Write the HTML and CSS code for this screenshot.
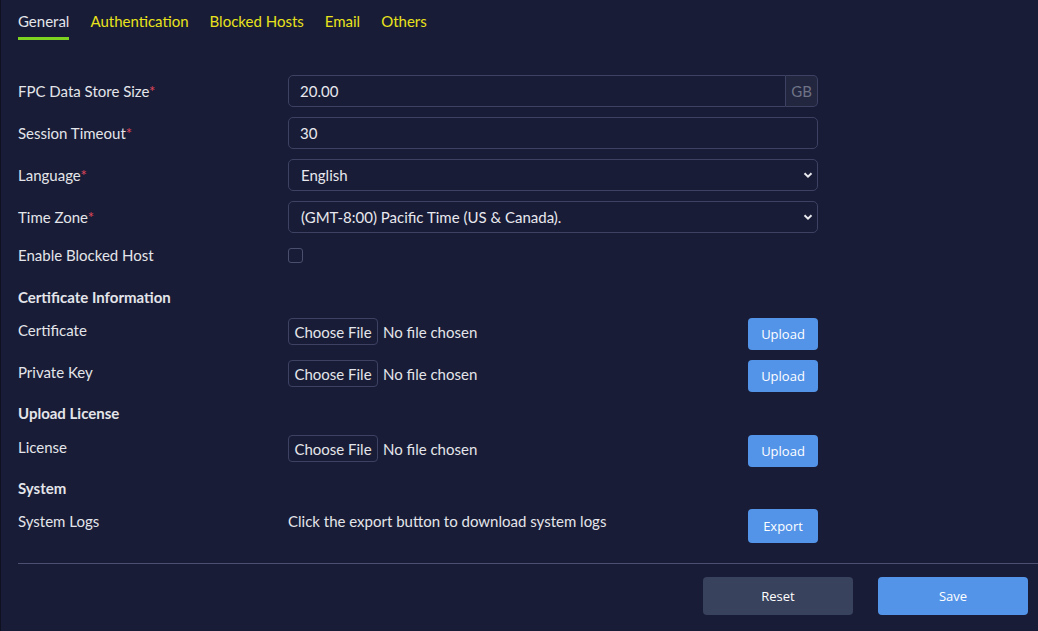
FILE: index.html
```html
<!DOCTYPE html>
<html>
<head>
    <title>Settings</title>
    <meta name="viewport" content="width=device-width, initial-scale=1.0">
    <link rel="stylesheet" href="styles.css">
</head>
<body>
    <div class="page">
        <!-- Tabs -->
        <nav class="tabs">
            <a class="tab active">General</a>
            <a class="tab">Authentication</a>
            <a class="tab">Blocked Hosts</a>
            <a class="tab">Email</a>
            <a class="tab">Others</a>
        </nav>

        <form class="settings">
            <div class="row">
                <label for="store-size">FPC Data Store Size<span class="req">*</span></label>
                <div class="input-group">
                    <input type="text" id="store-size" class="field" value="20.00">
                    <span class="addon">GB</span>
                </div>
            </div>

            <div class="row">
                <label for="session-timeout">Session Timeout<span class="req">*</span></label>
                <input type="text" id="session-timeout" class="field" value="30">
            </div>

            <div class="row">
                <label for="language">Language<span class="req">*</span></label>
                <div class="select-wrap">
                    <select id="language" class="field">
                        <option>English</option>
                    </select>
                    <svg class="chevron" width="10" height="8" viewBox="0 0 10 8"><path d="M1.5 2.2 5 5.6 8.5 2.2" fill="none" stroke="#e8e8ee" stroke-width="2"/></svg>
                </div>
            </div>

            <div class="row">
                <label for="timezone">Time Zone<span class="req">*</span></label>
                <div class="select-wrap">
                    <select id="timezone" class="field">
                        <option>(GMT-8:00) Pacific Time (US &amp; Canada).</option>
                    </select>
                    <svg class="chevron" width="10" height="8" viewBox="0 0 10 8"><path d="M1.5 2.2 5 5.6 8.5 2.2" fill="none" stroke="#e8e8ee" stroke-width="2"/></svg>
                </div>
            </div>

            <div class="row check-row">
                <label for="blocked-host">Enable Blocked Host</label>
                <div><input type="checkbox" id="blocked-host" class="check"></div>
            </div>

            <!-- Certificate Information -->
            <h3 class="section">Certificate Information</h3>
            <div class="row file-row">
                <label>Certificate</label>
                <div class="file-line">
                    <div class="file-pick"><span class="choose">Choose File</span><span>No file chosen</span></div>
                    <button type="button" class="btn-small">Upload</button>
                </div>
            </div>
            <div class="row file-row">
                <label>Private Key</label>
                <div class="file-line">
                    <div class="file-pick"><span class="choose">Choose File</span><span>No file chosen</span></div>
                    <button type="button" class="btn-small">Upload</button>
                </div>
            </div>

            <!-- Upload License -->
            <h3 class="section">Upload License</h3>
            <div class="row file-row">
                <label>License</label>
                <div class="file-line">
                    <div class="file-pick"><span class="choose">Choose File</span><span>No file chosen</span></div>
                    <button type="button" class="btn-small">Upload</button>
                </div>
            </div>

            <!-- System -->
            <h3 class="section">System</h3>
            <div class="row file-row">
                <label>System Logs</label>
                <div class="file-line">
                    <span class="hint">Click the export button to download system logs</span>
                    <button type="button" class="btn-small tall">Export</button>
                </div>
            </div>
        </form>

        <hr class="divider">

        <div class="footer">
            <button type="button" class="btn-big reset">Reset</button>
            <button type="button" class="btn-big save">Save</button>
        </div>
    </div>
</body>
</html>
```

FILE: styles.css
```css
html, body {
    height: 100%;
}

body {
    margin: 0;
    background-color: #181c36;
    color: #e4e5ea;
    font-family: Lato, "Open Sans", sans-serif;
    font-size: 15px;
    border-left: 1px solid #0f1120;
    overflow: hidden;
}

.page {
    padding-left: 17px;
}

/* Tabs */
.tabs {
    display: flex;
    gap: 21px;
}

.tab {
    padding-top: 11px;
    padding-bottom: 6px;
    line-height: 20px;
    font-size: 15px;
    color: #e9e21c;
    border-bottom: 3px solid transparent;
    cursor: pointer;
}

.tab.active {
    color: #e4e5ea;
    border-bottom-color: #7ed321;
}

/* Form */
.settings {
    width: 800px;
    margin-top: 35px;
    display: flex;
    flex-direction: column;
}

.row {
    display: grid;
    grid-template-columns: 270px 530px;
    align-items: center;
    height: 32px;
    margin-bottom: 10px;
}

.req {
    color: #e0475b;
}

.field {
    box-sizing: border-box;
    width: 100%;
    height: 32px;
    padding: 0 11px;
    background-color: transparent;
    border: 1px solid #3d4263;
    border-radius: 5px;
    color: #e8e8ee;
    font-family: Lato, sans-serif;
    font-size: 15px;
    outline: none;
}

.input-group {
    display: flex;
}

.input-group .field {
    border-radius: 5px 0 0 5px;
}

.addon {
    width: 32px;
    flex: none;
    box-sizing: border-box;
    display: flex;
    align-items: center;
    justify-content: center;
    background-color: #22263f;
    border: 1px solid #3d4263;
    border-left: none;
    border-radius: 0 5px 5px 0;
    color: #6f7386;
}

.select-wrap {
    position: relative;
}

.select-wrap select {
    appearance: none;
    padding-left: 12px;
}

.chevron {
    position: absolute;
    right: 5px;
    top: 12px;
}

.check-row {
    height: 24px;
    margin-bottom: 20px;
}

.check {
    appearance: none;
    display: block;
    width: 15px;
    height: 15px;
    margin: 1px 0 0;
    border: 1px solid #4a4f6e;
    border-radius: 3px;
}

.section {
    margin: 0 0 11px;
    line-height: 20px;
    font-size: 15px;
    font-weight: bold;
}

.file-row {
    align-items: start;
    margin-bottom: 10px;
}

.file-row label {
    line-height: 24px;
}

.file-row:has(+ .section),
.file-row:last-child {
    margin-bottom: 11px;
}

.file-row + .file-row + .section {
    margin-bottom: 12px;
}

.file-line {
    display: flex;
    justify-content: space-between;
    align-items: flex-start;
}

.file-pick {
    display: flex;
    align-items: center;
    gap: 5px;
}

.choose {
    box-sizing: border-box;
    height: 27px;
    width: 90px;
    display: flex;
    align-items: center;
    justify-content: center;
    border: 1px solid #3d4263;
    border-radius: 4px;
}

.hint {
    line-height: 24px;
}

.btn-small {
    width: 70px;
    height: 32px;
    border: none;
    border-radius: 4px;
    background-color: #5394e8;
    color: #fff;
    font-family: "Open Sans", sans-serif;
    font-size: 13px;
    cursor: pointer;
}

.btn-small.tall {
    height: 34px;
}

.divider {
    margin: 11px 0 0;
    border: none;
    border-top: 1px solid #4b5070;
}

.footer {
    display: flex;
    justify-content: flex-end;
    gap: 25px;
    padding: 13px 10px 0 0;
}

.btn-big {
    width: 150px;
    height: 38px;
    border: none;
    border-radius: 4px;
    color: #fff;
    font-family: "Open Sans", sans-serif;
    font-size: 13px;
    cursor: pointer;
}

.reset {
    background-color: #39425d;
}

.save {
    background-color: #5394e8;
}
```
